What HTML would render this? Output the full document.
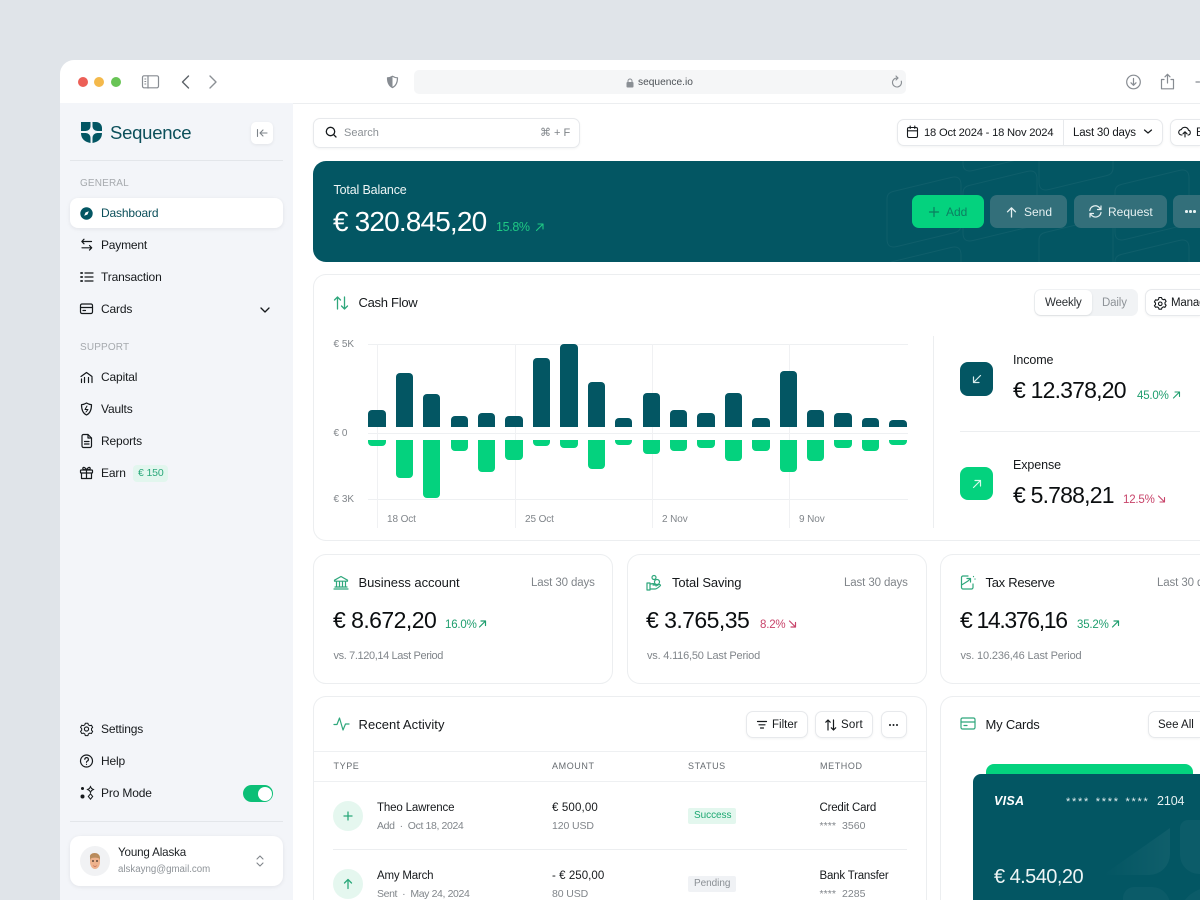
<!DOCTYPE html>
<html lang="en"><head><meta charset="utf-8"><title>Sequence</title>
<style>
*{box-sizing:border-box}
html,body{margin:0;padding:0;width:1200px;height:900px;overflow:hidden}
body{background:#e0e4e9;font-family:"Liberation Sans",sans-serif;color:#16191c}
#r{position:absolute;left:0;top:0;width:1200px;height:900px;overflow:hidden;background:#e0e4e9}
.a{position:absolute}
.t{position:absolute;white-space:nowrap;line-height:16px;font-size:12px;letter-spacing:-.15px}
.g{color:#80858a}
.s{position:absolute;overflow:visible}
.card{position:absolute;background:#fff;border:1px solid #eceef0;border-radius:13px}
.cr{border-right:0;border-top-right-radius:0;border-bottom-right-radius:0}
.cb{border-bottom:0;border-bottom-left-radius:0;border-bottom-right-radius:0}
.btn{position:absolute;background:#fff;border:1px solid #e7e9ec;border-radius:7px;box-shadow:0 1px 2px rgba(20,30,40,.05)}
.br{border-right:0;border-top-right-radius:0;border-bottom-right-radius:0}
.d i,.l i{position:absolute;display:block;width:17.4px}
.d i{background:#035663;border-radius:4px 4px 0 0}
.l i{background:#04d27e;border-radius:0 0 4px 4px;top:440px}
.gh{position:absolute;height:1px;background:#eef0f2}
.gv{position:absolute;width:1px;background:#f0f1f3}
.val{position:absolute;white-space:nowrap;line-height:28px;font-size:23px;letter-spacing:-.55px;color:#0b0e10}
.pu{color:#1f9e6e;font-size:11.5px;letter-spacing:-.2px}
.pd{color:#c8446a;font-size:11.5px;letter-spacing:-.2px}
.th{position:absolute;font-size:9px;letter-spacing:.6px;color:#666b70;line-height:12px}
</style></head><body><div id="r">

<!-- window -->
<div class="a" style="left:60px;top:60px;width:1140px;height:840px;background:#fff;border-radius:14px 0 0 0"></div>
<div class="a" style="left:60px;top:103px;width:233px;height:797px;background:#f3f5f9"></div>
<div class="a" style="left:293px;top:103px;width:907px;height:1px;background:#eceef0"></div>

<!-- traffic lights -->
<div class="a" style="left:77.5px;top:76.5px;width:10px;height:10px;border-radius:50%;background:#ec5f57"></div>
<div class="a" style="left:94px;top:76.5px;width:10px;height:10px;border-radius:50%;background:#f4b94b"></div>
<div class="a" style="left:111px;top:76.5px;width:10px;height:10px;border-radius:50%;background:#68c455"></div>

<svg class="s" style="left:0;top:0" width="1200" height="104" fill="none" stroke="#878c92" stroke-width="1.2" stroke-linecap="round" stroke-linejoin="round">
<rect x="142.5" y="75.8" width="16" height="12" rx="1.5"/><path d="M148 76v12"/><path d="M144.8 79h1M144.8 81.5h1M144.8 84h1" stroke-width="1"/>
<path d="M188.5 76 182.5 82l6 6" stroke="#5c6267" stroke-width="1.4"/><path d="M210 76l6 6-6 6" stroke="#8b9095" stroke-width="1.4"/>
<path d="M392.5 76.2c1.6 1 3.2 1.5 5 1.6 0 4.6-1.2 8-5 9.8-3.8-1.8-5-5.2-5-9.8 1.8-.1 3.4-.6 5-1.6z"/><path d="M392.5 76.5v11c-3.5-1.8-4.8-5-4.8-9.5 1.8-.1 3.3-.5 4.8-1.5z" fill="#878c92" stroke="none"/>
<circle cx="1133.5" cy="82" r="6.8"/><path d="M1133.5 78.5v6.5M1131 82.8l2.5 2.5 2.5-2.5"/>
<path d="M1164 79.5h-2.5v9.3h12v-9.3H1171M1167.5 83V74.5M1165 76.8l2.5-2.5 2.5 2.5"/>
<path d="M1196 82h3.5"/>
</svg>
<div class="a" style="left:414px;top:70px;width:492px;height:24px;background:#f5f6f7;border-radius:5px"></div>
<svg class="s" style="left:625px;top:78px" width="10" height="10" fill="#8a8f94"><rect x="1.5" y="4" width="7" height="5.5" rx="1"/><path d="M3 4V3a2 2 0 0 1 4 0v1" fill="none" stroke="#8a8f94"/></svg>
<div class="t" style="left:638px;top:75px;font-size:10.2px;letter-spacing:0;color:#4d5257">sequence.io</div>
<svg class="s" style="left:890px;top:75px" width="14" height="14" fill="none" stroke="#8a8f94" stroke-width="1.1" stroke-linecap="round"><path d="M7 3a4.5 4.5 0 1 0 4.3 3.2"/><path d="M6 1l2 2-2 2"/></svg>

<!-- sidebar top -->
<svg class="s" style="left:81px;top:122px" width="21" height="21" fill="#035663"><path d="M0 0h9.500v4.200A4.800 4.800 0 0 1 4.700 9H0z"/><path d="M11.500 0H15c3.500 0 6 2.500 6 6v3h-4.700a4.800 4.800 0 0 1-4.800-4.800z"/><path d="M0 11h4.700a4.800 4.800 0 0 1 4.800 4.800V21C4 20 0 17 0 11z"/><path d="M21 11c0 6-4 9-9.500 10v-5.200a4.800 4.800 0 0 1 4.800-4.800z"/></svg>
<div class="t" style="left:110px;top:123px;font-size:18.5px;line-height:20px;letter-spacing:-.25px;color:#0b4f5a">Sequence</div>
<div class="a" style="left:251px;top:122px;width:22px;height:22px;background:#fff;border-radius:5px;box-shadow:0 1px 3px rgba(20,30,40,.08)"></div>
<svg class="s" style="left:251px;top:122px" width="22" height="22" fill="none" stroke="#7d8389" stroke-width="1.1" stroke-linecap="round" stroke-linejoin="round"><path d="M6.500 7.500v7M16 11H9M12 8l-3 3 3 3"/></svg>
<div class="a" style="left:70px;top:160px;width:213px;height:1px;background:#e3e6ea"></div>
<div class="t" style="left:80px;top:176px;font-size:10px;letter-spacing:.15px;color:#a6aaae">GENERAL</div>

<div class="a" style="left:70px;top:198px;width:213px;height:30px;background:#fff;border-radius:8px;box-shadow:0 1px 4px rgba(20,30,40,.08)"></div>
<svg class="s" style="left:80px;top:207px" width="13" height="13"><circle cx="6.5" cy="6.5" r="6.2" fill="#035663"/><path d="M8.800 4.200 7.500 7.500 4.200 8.800 5.500 5.500z" fill="#fff"/></svg>
<div class="t" style="left:101px;top:205px;color:#0b4f5a">Dashboard</div>

<svg class="s" style="left:79px;top:237px" width="16" height="16" fill="none" stroke="#15191c" stroke-width="1.2" stroke-linecap="round" stroke-linejoin="round"><path d="M12.500 4.500H3M5 2.200 2.800 4.500 5 6.800M3 10.800h9.500M10.500 8.500l2.200 2.300-2.200 2.300"/></svg>
<div class="t" style="left:101px;top:237px;letter-spacing:-.2px">Payment</div>
<svg class="s" style="left:79px;top:269px" width="16" height="16" fill="none" stroke="#15191c" stroke-width="1.2" stroke-linecap="round"><path d="M6 4h8M6 8h8M6 12h8"/><path d="M2 4h1.200M2 8h1.200M2 12h1.200" stroke-width="1.800"/></svg>
<div class="t" style="left:101px;top:269px">Transaction</div>
<svg class="s" style="left:79px;top:301px" width="16" height="16" fill="none" stroke="#15191c" stroke-width="1.2" stroke-linecap="round"><rect x="1.5" y="3" width="12" height="9.5" rx="1.5"/><path d="M1.500 6.500h12M4 9.500h2.500"/></svg>
<div class="t" style="left:101px;top:301px">Cards</div>
<svg class="s" style="left:258px;top:305px" width="14" height="10" fill="none" stroke="#15191c" stroke-width="1.3" stroke-linecap="round" stroke-linejoin="round"><path d="M3 3l4 4 4-4"/></svg>

<div class="t" style="left:80px;top:340px;font-size:10px;letter-spacing:.15px;color:#a6aaae">SUPPORT</div>
<svg class="s" style="left:79px;top:369px" width="16" height="16" fill="none" stroke="#15191c" stroke-width="1.2" stroke-linecap="round" stroke-linejoin="round"><path d="M2 7.500 7.500 3.500 13 7.500"/><path d="M2.500 10v3.500M5.500 8.500v5M9.500 8.500v5M13 8.500v5"/></svg>
<div class="t" style="left:101px;top:369px">Capital</div>
<svg class="s" style="left:79px;top:401px" width="16" height="16" fill="none" stroke="#15191c" stroke-width="1.2" stroke-linecap="round" stroke-linejoin="round"><path d="M7.500 2c1.800 1.100 3.400 1.600 5 1.700 0 5-1.300 8.500-5 10.300-3.700-1.800-5-5.300-5-10.300 1.600-.1 3.200-.6 5-1.700z"/><path d="M8 5 6 8.500h3L7 11" stroke-width="1"/></svg>
<div class="t" style="left:101px;top:401px">Vaults</div>
<svg class="s" style="left:79px;top:433px" width="16" height="16" fill="none" stroke="#15191c" stroke-width="1.2" stroke-linecap="round" stroke-linejoin="round"><path d="M3 3a1.500 1.500 0 0 1 1.500-1.500H9L12.500 5v8a1.500 1.500 0 0 1-1.500 1.500H4.500A1.500 1.500 0 0 1 3 13z"/><path d="M9 1.500V5h3.500M5.500 8.500h4.500M5.500 11h4.500"/></svg>
<div class="t" style="left:101px;top:433px">Reports</div>
<svg class="s" style="left:79px;top:465px" width="16" height="16" fill="none" stroke="#15191c" stroke-width="1.2" stroke-linecap="round" stroke-linejoin="round"><rect x="1.5" y="5" width="12" height="3" rx=".8"/><path d="M2.500 8v5.500h10V8M7.500 5v8.500M7.500 5C6 2 4 1.800 3.800 3.300 3.700 4.500 5.500 5 7.500 5zM7.500 5C9 2 11 1.800 11.200 3.300 11.300 4.500 9.500 5 7.500 5z"/></svg>
<div class="t" style="left:101px;top:465px">Earn</div>
<div class="a" style="left:133px;top:465px;width:35px;height:17px;background:#e2f6ee;border-radius:4px"></div>
<div class="t" style="left:138px;top:465px;font-size:10.5px;color:#2aa87a">€ 150</div>

<svg class="s" style="left:79px;top:721px" width="16" height="16" fill="none" stroke="#15191c" stroke-width="1.150" stroke-linejoin="round"><path d="M6 2h3l.5 1.800 1.700.9 1.800-.5 1.400 2.500-1.300 1.300v1.900l1.300 1.300-1.400 2.500-1.800-.5-1.700 1-.5 1.800H6l-.5-1.800-1.700-1-1.800.5L.6 11.200l1.300-1.300V8L.6 6.700 2 4.200l1.800.5 1.700-.9z" transform="translate(1 .5) scale(.88)"/><circle cx="7.5" cy="8" r="2.100"/></svg>
<div class="t" style="left:101px;top:721px">Settings</div>
<svg class="s" style="left:79px;top:753px" width="16" height="16" fill="none" stroke="#15191c" stroke-width="1.2" stroke-linecap="round"><circle cx="7.5" cy="8" r="6"/><path d="M5.800 6.300a1.800 1.800 0 1 1 2.600 1.700c-.6.300-.9.700-.9 1.300"/><path d="M7.500 11.300v.1"/></svg>
<div class="t" style="left:101px;top:753px">Help</div>
<svg class="s" style="left:79px;top:785px" width="16" height="16" fill="#15191c"><circle cx="3.500" cy="3.500" r="1.500"/><circle cx="3.500" cy="11.500" r="2"/><path d="M11.500 1.500l1 2 2 1-2 1-1 2-1-2-2-1 2-1z" fill="none" stroke="#15191c"/><path d="M11.500 8.800l2.200 2.700-2.200 2.700-2.200-2.700z" fill="none" stroke="#15191c"/></svg>
<div class="t" style="left:101px;top:785px">Pro Mode</div>
<div class="a" style="left:243px;top:785px;width:30px;height:17px;border-radius:9px;background:#0cbf77"></div>
<div class="a" style="left:258px;top:786.5px;width:14px;height:14px;border-radius:50%;background:#fff"></div>
<div class="a" style="left:70px;top:821px;width:213px;height:1px;background:#e3e6ea"></div>

<div class="a" style="left:70px;top:836px;width:213px;height:50px;background:#fff;border-radius:10px;box-shadow:0 1px 4px rgba(20,30,40,.08)"></div>
<div class="a" style="left:80px;top:846px;width:30px;height:30px;border-radius:50%;background:#f1f2f4"></div>
<svg class="s" style="left:85px;top:850px" width="20" height="22"><path d="M5 7c-1-5 10-6 10 1v3H5z" fill="#b98a5a"/><ellipse cx="10" cy="12" rx="5" ry="7" fill="#eeb28d"/><path d="M5 9C5.500 5 9 4.500 10.500 5c2 .5 4 1 4.500 4-2-1.500-7-2-10 0z" fill="#b88c5e"/><circle cx="8" cy="11" r=".9" fill="#3a2a20"/><circle cx="12" cy="11" r=".9" fill="#3a2a20"/><path d="M7.800 15.200c1.500 1 3 1 4.400 0-.6 1.700-3.800 1.700-4.400 0z" fill="#b3493e"/></svg>
<div class="t" style="left:118px;top:845px;font-size:11.6px;color:#1c2023">Young Alaska</div>
<div class="t" style="left:118px;top:862px;font-size:9.7px;letter-spacing:0;color:#8e9398">alskayng@gmail.com</div>
<svg class="s" style="left:254px;top:854px" width="12" height="14" fill="none" stroke="#80858a" stroke-width="1.1" stroke-linecap="round" stroke-linejoin="round"><path d="M3 5l3-3 3 3M3 9l3 3 3-3"/></svg>

<!-- top controls -->
<div class="btn" style="left:313px;top:118px;width:267px;height:30px"></div>
<svg class="s" style="left:324px;top:125px" width="14" height="14" fill="none" stroke="#15191c" stroke-width="1.3" stroke-linecap="round"><circle cx="6.5" cy="6.5" r="4.2"/><path d="M9.800 9.800 12 12"/></svg>
<div class="t" style="left:344px;top:125px;font-size:11px;letter-spacing:0;color:#8b9095">Search</div>
<div class="t" style="left:540px;top:125px;font-size:11px;letter-spacing:0;color:#7d8287">⌘ + F</div>

<div class="btn" style="left:897px;top:119px;width:266px;height:27px"></div>
<div class="a" style="left:1063px;top:119px;width:1px;height:27px;background:#e7e9ec"></div>
<svg class="s" style="left:906px;top:125px" width="14" height="14" fill="none" stroke="#15191c" stroke-width="1.1" stroke-linecap="round"><rect x="1.5" y="2.500" width="10" height="10" rx="1.5"/><path d="M1.500 5.800h10M4.200 1v2.500M8.800 1v2.500"/></svg>
<div class="t" style="left:924px;top:125px;font-size:11.2px;letter-spacing:-.2px">18 Oct 2024 - 18 Nov 2024</div>
<div class="t" style="left:1073px;top:125px;font-size:11.5px;letter-spacing:-.2px">Last 30 days</div>
<svg class="s" style="left:1142px;top:127px" width="12" height="10" fill="none" stroke="#15191c" stroke-width="1.2" stroke-linecap="round" stroke-linejoin="round"><path d="M2.500 3 6 6l3.500-3"/></svg>
<div class="btn br" style="left:1170px;top:119px;width:30px;height:27px"></div>
<svg class="s" style="left:1178px;top:125px" width="14" height="14" fill="none" stroke="#15191c" stroke-width="1.1" stroke-linecap="round" stroke-linejoin="round"><path d="M4 10H3.500a2.700 2.700 0 0 1-.2-5.400A3.800 3.800 0 0 1 10.500 5.200 2.500 2.500 0 0 1 10.500 10H10M7 12V7M5 8.800l2-2 2 2"/></svg>
<div class="t" style="left:1196px;top:125px;width:4px;overflow:hidden;font-size:11.5px">Export</div>

<!-- balance -->
<div class="a" style="left:313px;top:161px;width:887px;height:101px;background:#035663;border-radius:13px 0 0 13px;overflow:hidden">
<svg class="s" style="left:0;top:0;overflow:hidden" width="887" height="101" fill="none" stroke="#fff" stroke-opacity=".05">
<defs><path id="tile" d="M0 22Q0 16 6 14.500L64 .5Q74-2 74 8V48Q74 54 68 55.500L10 69.500Q0 72 0 62z"/></defs>
<use href="#tile" x="574" y="16"/><use href="#tile" x="574" y="86"/>
<use href="#tile" x="650" y="10"/><use href="#tile" x="650" y="-60"/>
<use href="#tile" x="726" y="-41"/><use href="#tile" x="726" y="57"/>
<use href="#tile" x="802" y="9"/><use href="#tile" x="802" y="79"/>
</svg>
</div>
<div class="t" style="left:333.5px;top:182px;font-size:12.5px;color:#eef5f5">Total Balance</div>
<div class="t" style="left:333px;top:206px;font-size:28px;line-height:32px;letter-spacing:-.85px;color:#fff">€ 320.845,20</div>
<div class="t" style="left:496px;top:219px;font-size:12.5px;letter-spacing:-.35px;color:#1fc884">15.8%</div>
<svg class="s" style="left:534px;top:221px" width="12" height="12" fill="none" stroke="#1fc884" stroke-width="1.1" stroke-linecap="round" stroke-linejoin="round"><path d="M2.500 9.500 9 3M4 3h5v5"/></svg>

<div class="a" style="left:912px;top:195px;width:72px;height:33px;background:#04d27e;border-radius:7px"></div>
<svg class="s" style="left:927px;top:205px" width="14" height="14" fill="none" stroke="#0a7d5f" stroke-width="1.2" stroke-linecap="round"><path d="M7 2.500v9M2.500 7h9"/></svg>
<div class="t" style="left:946px;top:204px;font-size:12px;color:#0c7f62;letter-spacing:0">Add</div>
<div class="a" style="left:990px;top:195px;width:77px;height:33px;background:#336f7a;border-radius:7px"></div>
<svg class="s" style="left:1004px;top:205px" width="14" height="14" fill="none" stroke="#e6f0f1" stroke-width="1.3" stroke-linecap="round" stroke-linejoin="round"><path d="M7.500 12V3M3.500 6.800l4-4 4 4"/></svg>
<div class="t" style="left:1024px;top:204px;font-size:12px;color:#e6f0f1;letter-spacing:0">Send</div>
<div class="a" style="left:1074px;top:195px;width:93px;height:33px;background:#336f7a;border-radius:7px"></div>
<svg class="s" style="left:1088px;top:204px" width="15" height="15" fill="none" stroke="#e6f0f1" stroke-width="1.2" stroke-linecap="round" stroke-linejoin="round"><path d="M1.800 6.500A5.500 5.500 0 0 1 11.500 3.800L13 5.500M13 2v3.500H9.500M13 8.500A5.500 5.500 0 0 1 3.500 11.200L2 9.500M2 13V9.500h3.500"/></svg>
<div class="t" style="left:1108px;top:204px;font-size:12px;color:#e6f0f1;letter-spacing:0">Request</div>
<div class="a" style="left:1173px;top:195px;width:27px;height:33px;background:#336f7a;border-radius:7px 0 0 7px"></div>
<div class="a" style="left:1185px;top:210px;width:2.5px;height:2.5px;border-radius:50%;background:#e6f0f1;box-shadow:4px 0 0 #e6f0f1,8px 0 0 #e6f0f1"></div>

<!-- cash flow -->
<div class="card cr" style="left:313px;top:274px;width:887px;height:267px"></div>
<svg class="s" style="left:333px;top:295px" width="16" height="16" fill="none" stroke="#2fa77c" stroke-width="1.3" stroke-linecap="round" stroke-linejoin="round"><path d="M4.500 14V2M1.500 5l3-3 3 3M11.500 2v12M8.500 11l3 3 3-3"/></svg>
<div class="t" style="left:358.5px;top:295px;font-size:13px;letter-spacing:-.28px">Cash Flow</div>

<div class="a" style="left:1034px;top:289px;width:104px;height:27px;background:#f1f3f5;border-radius:7px"></div>
<div class="a" style="left:1035px;top:290px;width:57px;height:25px;background:#fff;border-radius:6px;box-shadow:0 1px 2px rgba(20,30,40,.1)"></div>
<div class="t" style="left:1045px;top:295px;font-size:11.5px;letter-spacing:-.15px;color:#2b2f33">Weekly</div>
<div class="t" style="left:1102px;top:295px;font-size:11.5px;letter-spacing:-.15px;color:#8e9398">Daily</div>
<div class="btn br" style="left:1145px;top:289px;width:55px;height:27px"></div>
<svg class="s" style="left:1154px;top:296px" width="14" height="14" fill="none" stroke="#15191c" stroke-width="1.1" stroke-linejoin="round"><path d="M5 1.500h2.500l.5 1.500 1.400.7 1.500-.4 1.200 2.100-1.100 1.100v1.600l1.100 1.100-1.200 2.100-1.500-.4-1.400.8-.5 1.500H5l-.5-1.500-1.400-.8-1.500.4L.4 9.700l1.100-1.100V7L.4 5.900l1.200-2.100 1.500.4 1.400-.7z"/><circle cx="6.250" cy="7.800" r="1.800"/></svg>
<div class="t" style="left:1171px;top:295px;width:29px;overflow:hidden;font-size:11.5px">Manage</div>

<!-- chart -->
<div class="gh" style="left:368px;top:343.5px;width:540px"></div>
<div class="gh" style="left:368px;top:432.5px;width:540px"></div>
<div class="gh" style="left:368px;top:498.5px;width:540px"></div>
<div class="gv" style="left:376.5px;top:344px;height:184px"></div>
<div class="gv" style="left:514.5px;top:344px;height:184px"></div>
<div class="gv" style="left:652px;top:344px;height:184px"></div>
<div class="gv" style="left:788.5px;top:344px;height:184px"></div>
<div class="t g" style="left:333.5px;top:337px;font-size:10px;letter-spacing:0">€ 5K</div>
<div class="t g" style="left:333.5px;top:426px;font-size:10px;letter-spacing:0">€ 0</div>
<div class="t g" style="left:333.5px;top:492px;font-size:10px;letter-spacing:0">€ 3K</div>
<div class="t g" style="left:387px;top:512px;font-size:10px;letter-spacing:-.1px">18 Oct</div>
<div class="t g" style="left:525px;top:512px;font-size:10px;letter-spacing:-.1px">25 Oct</div>
<div class="t g" style="left:662px;top:512px;font-size:10px;letter-spacing:-.1px">2 Nov</div>
<div class="t g" style="left:799px;top:512px;font-size:10px;letter-spacing:-.1px">9 Nov</div>

<div class="d">
<i style="left:368.3px;top:410px;height:16.7px"></i>
<i style="left:395.7px;top:372.7px;height:54px"></i>
<i style="left:423.1px;top:394px;height:32.7px"></i>
<i style="left:450.6px;top:416px;height:10.7px"></i>
<i style="left:478px;top:413.3px;height:13.4px"></i>
<i style="left:505.4px;top:416px;height:10.7px"></i>
<i style="left:532.8px;top:358.3px;height:68.4px"></i>
<i style="left:560.2px;top:344.3px;height:82.4px"></i>
<i style="left:587.7px;top:381.7px;height:45px"></i>
<i style="left:615.1px;top:417.7px;height:9px"></i>
<i style="left:642.5px;top:393.3px;height:33.4px"></i>
<i style="left:669.9px;top:410px;height:16.7px"></i>
<i style="left:697.3px;top:413.3px;height:13.4px"></i>
<i style="left:724.8px;top:393.3px;height:33.4px"></i>
<i style="left:752.2px;top:417.7px;height:9px"></i>
<i style="left:779.6px;top:371.3px;height:55.4px"></i>
<i style="left:807px;top:410px;height:16.7px"></i>
<i style="left:834.4px;top:413.3px;height:13.4px"></i>
<i style="left:861.9px;top:417.7px;height:9px"></i>
<i style="left:889.3px;top:420px;height:6.7px"></i>
</div>
<div class="l">
<i style="left:368.3px;height:6.3px"></i>
<i style="left:395.7px;height:38px"></i>
<i style="left:423.1px;height:58px"></i>
<i style="left:450.6px;height:10.7px"></i>
<i style="left:478px;height:32.3px"></i>
<i style="left:505.4px;height:20.3px"></i>
<i style="left:532.8px;height:6.3px"></i>
<i style="left:560.2px;height:8px"></i>
<i style="left:587.7px;height:29.3px"></i>
<i style="left:615.1px;height:5px"></i>
<i style="left:642.5px;height:14px"></i>
<i style="left:669.9px;height:10.7px"></i>
<i style="left:697.3px;height:8px"></i>
<i style="left:724.8px;height:20.7px"></i>
<i style="left:752.2px;height:10.7px"></i>
<i style="left:779.6px;height:32.3px"></i>
<i style="left:807px;height:20.7px"></i>
<i style="left:834.4px;height:8px"></i>
<i style="left:861.9px;height:10.7px"></i>
<i style="left:889.3px;height:4.7px"></i>
</div>

<div class="a" style="left:933px;top:336px;width:1px;height:192px;background:#eceef0"></div>
<div class="a" style="left:960px;top:362px;width:33px;height:34px;background:#035663;border-radius:8px"></div>
<svg class="s" style="left:970px;top:372px" width="14" height="14" fill="none" stroke="#d6ecec" stroke-width="1.2" stroke-linecap="round" stroke-linejoin="round"><path d="M10.500 3.500 3.500 10.500M3.500 5v5.500H9"/></svg>
<div class="t" style="left:1013px;top:352px;font-size:12.5px;letter-spacing:-.1px">Income</div>
<div class="val" style="left:1013px;top:376px;letter-spacing:-.8px">€ 12.378,20</div>
<div class="t pu" style="left:1137px;top:388px">45.0%</div>
<svg class="s" style="left:1171px;top:389px" width="12" height="12" fill="none" stroke="#1f9e6e" stroke-width="1.1" stroke-linecap="round" stroke-linejoin="round"><path d="M2.500 9 8.500 3M4 3h4.500v4.500"/></svg>
<div class="a" style="left:960px;top:431px;width:240px;height:1px;background:#eceef0"></div>
<div class="a" style="left:960px;top:467px;width:33px;height:33px;background:#04d27e;border-radius:8px"></div>
<svg class="s" style="left:970px;top:477px" width="14" height="14" fill="none" stroke="#d8fbec" stroke-width="1.2" stroke-linecap="round" stroke-linejoin="round"><path d="M3.500 10.500 10.500 3.500M5 3.500h5.500V9"/></svg>
<div class="t" style="left:1013px;top:457px;font-size:12.5px;letter-spacing:-.1px">Expense</div>
<div class="val" style="left:1013px;top:481px;letter-spacing:-.8px">€ 5.788,21</div>
<div class="t pd" style="left:1123px;top:492px">12.5%</div>
<svg class="s" style="left:1156px;top:493px" width="12" height="12" fill="none" stroke="#c8446a" stroke-width="1.1" stroke-linecap="round" stroke-linejoin="round"><path d="M2.500 3 8.500 9M8.500 4.500V9H4"/></svg>

<!-- stat cards -->
<div class="card" style="left:313px;top:554px;width:300px;height:130px"></div>
<svg class="s" style="left:333px;top:575px" width="16" height="16" fill="none" stroke="#2fa77c" stroke-width="1.2" stroke-linecap="round" stroke-linejoin="round"><path d="M1.500 5.200 8 1.500l6.500 3.700v1h-13zM1 14h14M3.500 6.500v5.500M6.500 6.500v5.500M9.500 6.500v5.500M12.500 6.500v5.500M2 12h12"/></svg>
<div class="t" style="left:358.5px;top:575px;font-size:13px;letter-spacing:-.05px">Business account</div>
<div class="t g" style="left:531px;top:575px;font-size:11.5px;letter-spacing:-.12px">Last 30 days</div>
<div class="val" style="left:333px;top:606px">€ 8.672,20</div>
<div class="t pu" style="left:445px;top:617px">16.0%</div>
<svg class="s" style="left:477px;top:618px" width="12" height="12" fill="none" stroke="#1f9e6e" stroke-width="1.2" stroke-linecap="round" stroke-linejoin="round"><path d="M2.500 9 8.500 3M4 3h4.500v4.500"/></svg>
<div class="t g" style="left:333.5px;top:648px;font-size:11px;letter-spacing:-.38px">vs. 7.120,14 Last Period</div>

<div class="card" style="left:627px;top:554px;width:300px;height:130px"></div>
<svg class="s" style="left:646px;top:574px" width="17" height="18" fill="none" stroke="#2fa77c" stroke-width="1.2" stroke-linecap="round" stroke-linejoin="round"><circle cx="8" cy="3.500" r="2"/><circle cx="11" cy="8" r="2.500"/><path d="M1 9h3v7H1zM4 10c2 0 3-1 4.500 0l1 1H7M4 15h5c2 0 4-2 5.500-3.500 0-1-1-1.300-2-.8L10 12"/></svg>
<div class="t" style="left:672px;top:575px;font-size:13px;letter-spacing:-.12px">Total Saving</div>
<div class="t g" style="left:844px;top:575px;font-size:11.5px;letter-spacing:-.12px">Last 30 days</div>
<div class="val" style="left:646px;top:606px">€ 3.765,35</div>
<div class="t pd" style="left:760px;top:617px">8.2%</div>
<svg class="s" style="left:787px;top:618px" width="12" height="12" fill="none" stroke="#c8446a" stroke-width="1.2" stroke-linecap="round" stroke-linejoin="round"><path d="M2.500 3 8.500 9M8.500 4.500V9H4"/></svg>
<div class="t g" style="left:647px;top:648px;font-size:11px;letter-spacing:-.2px">vs. 4.116,50 Last Period</div>

<div class="card cr" style="left:940px;top:554px;width:260px;height:130px"></div>
<svg class="s" style="left:960px;top:574px" width="17" height="18" fill="none" stroke="#2fa77c" stroke-width="1.2" stroke-linecap="round" stroke-linejoin="round"><path d="M8 2H3a1.500 1.500 0 0 0-1.500 1.500v10A1.500 1.500 0 0 0 3 15h8.500a1.500 1.500 0 0 0 1.500-1.500V10M1.500 11 4 9.500 8 7l2-2M7 4.500h3.500V8M13.500 2.500v.1M15 5v.1"/></svg>
<div class="t" style="left:985.5px;top:575px;font-size:13px;letter-spacing:-.28px">Tax Reserve</div>
<div class="t g" style="left:1157px;top:575px;width:43px;overflow:hidden;font-size:11.5px;letter-spacing:-.12px">Last 30 days</div>
<div class="val" style="left:960px;top:606px;letter-spacing:-1.35px">€ 14.376,16</div>
<div class="t pu" style="left:1077px;top:617px">35.2%</div>
<svg class="s" style="left:1110px;top:618px" width="12" height="12" fill="none" stroke="#1f9e6e" stroke-width="1.2" stroke-linecap="round" stroke-linejoin="round"><path d="M2.500 9 8.500 3M4 3h4.500v4.500"/></svg>
<div class="t g" style="left:960.5px;top:648px;font-size:11px;letter-spacing:-.15px">vs. 10.236,46 Last Period</div>

<!-- recent activity -->
<div class="card cb" style="left:313px;top:696px;width:614px;height:204px"></div>
<svg class="s" style="left:333px;top:716px" width="18" height="16" fill="none" stroke="#2fa77c" stroke-width="1.2" stroke-linecap="round" stroke-linejoin="round"><path d="M1 8.500h3L6.500 2 10 14l2.500-6H16"/></svg>
<div class="t" style="left:358.5px;top:717px;font-size:13px;letter-spacing:.05px">Recent Activity</div>
<div class="btn" style="left:746px;top:711px;width:62px;height:27px"></div>
<svg class="s" style="left:755px;top:718px" width="14" height="14" fill="none" stroke="#15191c" stroke-width="1.2" stroke-linecap="round"><path d="M2.500 3.500h9M4 6.800h6M5.500 10h3"/></svg>
<div class="t" style="left:772px;top:717px;font-size:11.5px;letter-spacing:0">Filter</div>
<div class="btn" style="left:815px;top:711px;width:58px;height:27px"></div>
<svg class="s" style="left:824px;top:718px" width="14" height="14" fill="none" stroke="#15191c" stroke-width="1.2" stroke-linecap="round" stroke-linejoin="round"><path d="M4 12V2M1.800 4.200 4 2l2.200 2.200M9.500 2v10M7.300 9.800 9.500 12l2.200-2.200"/></svg>
<div class="t" style="left:841px;top:717px;font-size:11.5px;letter-spacing:.2px">Sort</div>
<div class="btn" style="left:881px;top:711px;width:26px;height:27px"></div>
<div class="a" style="left:888.5px;top:723.5px;width:2px;height:2px;border-radius:50%;background:#15191c;box-shadow:3.5px 0 0 #15191c,7px 0 0 #15191c"></div>
<div class="a" style="left:314px;top:751px;width:612px;height:1px;background:#eef0f2"></div>
<div class="th" style="left:333.5px;top:760px">TYPE</div>
<div class="th" style="left:552px;top:760px">AMOUNT</div>
<div class="th" style="left:688px;top:760px">STATUS</div>
<div class="th" style="left:820px;top:760px">METHOD</div>
<div class="a" style="left:314px;top:781px;width:612px;height:1px;background:#eef0f2"></div>

<div class="a" style="left:333px;top:801px;width:30px;height:30px;border-radius:50%;background:#e5f7ef"></div>
<svg class="s" style="left:341px;top:809px" width="14" height="14" fill="none" stroke="#2aa87a" stroke-width="1.3" stroke-linecap="round"><path d="M7 3v8M3 7h8"/></svg>
<div class="t" style="left:377px;top:800px;font-size:11.5px;letter-spacing:-.15px">Theo Lawrence</div>
<div class="t g" style="left:377px;top:818px;font-size:10.5px;letter-spacing:-.38px">Add &nbsp;·&nbsp; Oct 18, 2024</div>
<div class="t" style="left:552px;top:800px;font-size:11.5px;letter-spacing:.15px">€ 500,00</div>
<div class="t g" style="left:552px;top:818px;font-size:10.5px;letter-spacing:-.1px">120 USD</div>
<div class="a" style="left:688px;top:808px;width:48px;height:16px;background:#e3f7ee;border-radius:2px"></div>
<div class="t" style="left:694px;top:808px;font-size:10px;letter-spacing:-.05px;color:#1ea872">Success</div>
<div class="t" style="left:819.5px;top:800px;font-size:11.5px;letter-spacing:-.2px">Credit Card</div>
<div class="t g" style="left:819.5px;top:818px;font-size:10.5px;letter-spacing:.05px">**** &nbsp;3560</div>
<div class="a" style="left:333px;top:849px;width:574px;height:1px;background:#eceef0"></div>

<div class="a" style="left:333px;top:869px;width:30px;height:30px;border-radius:50%;background:#e5f7ef"></div>
<svg class="s" style="left:341px;top:877px" width="14" height="14" fill="none" stroke="#2aa87a" stroke-width="1.3" stroke-linecap="round" stroke-linejoin="round"><path d="M7 11.500v-9M3.500 6 7 2.500 10.500 6"/></svg>
<div class="t" style="left:377px;top:868px;font-size:11.5px;letter-spacing:-.2px">Amy March</div>
<div class="t g" style="left:377px;top:886px;height:14px;font-size:10.5px;letter-spacing:-.38px">Sent &nbsp;·&nbsp; May 24, 2024</div>
<div class="t" style="left:552px;top:868px;font-size:11.5px;letter-spacing:.05px">- € 250,00</div>
<div class="t g" style="left:552px;top:886px;height:14px;font-size:10.5px;letter-spacing:-.1px">80 USD</div>
<div class="a" style="left:688px;top:876px;width:48px;height:16px;background:#f0f2f5;border-radius:2px"></div>
<div class="t" style="left:694px;top:876px;font-size:10px;letter-spacing:-.05px;color:#8a8f94">Pending</div>
<div class="t" style="left:819.5px;top:868px;font-size:11.5px;letter-spacing:-.2px">Bank Transfer</div>
<div class="t g" style="left:819.5px;top:886px;height:14px;font-size:10.5px;letter-spacing:.05px">**** &nbsp;2285</div>

<!-- my cards -->
<div class="card cr cb" style="left:940px;top:696px;width:260px;height:204px"></div>
<svg class="s" style="left:960px;top:716px" width="17" height="16" fill="none" stroke="#2fa77c" stroke-width="1.2" stroke-linecap="round"><rect x="1" y="2" width="14" height="11" rx="1.5"/><path d="M1 6h14M4 9.500h3"/></svg>
<div class="t" style="left:985.5px;top:717px;font-size:13px;letter-spacing:-.2px">My Cards</div>
<div class="btn br" style="left:1148px;top:711px;width:52px;height:27px"></div>
<div class="t" style="left:1158px;top:717px;font-size:11.5px;letter-spacing:0">See All</div>

<div class="a" style="left:986px;top:764px;width:207px;height:30px;background:#04d27e;border-radius:8px 8px 0 0"></div>
<div class="a" style="left:973px;top:774px;width:227px;height:126px;background:#035663;border-radius:8px 0 0 0;overflow:hidden">
<svg class="s" style="left:0;top:0;overflow:hidden" width="227" height="126">
<defs><linearGradient id="fade" x1="0" y1="0" x2="1" y2="0"><stop offset="0" stop-color="#fff" stop-opacity="0"/><stop offset="1" stop-color="#fff" stop-opacity=".05"/></linearGradient></defs>
<path d="M197 54V80a21 21 0 0 1-21 21H130z" fill="url(#fade)"/>
<path d="M207 54a8 8 0 0 1 8-8h25v54h-14a19 19 0 0 1-19-19z" fill="#fff" fill-opacity=".04"/>
<path d="M150 140v-16a11 11 0 0 1 11-11h18a18 18 0 0 1 18 18v9z" fill="#fff" fill-opacity=".035"/>
<path d="M207 140c0-14 14-27 33-27v27z" fill="#fff" fill-opacity=".035"/>
</svg>
</div>
<div class="t" style="left:994px;top:793px;font-size:12.5px;font-weight:700;font-style:italic;letter-spacing:.3px;color:#fff">VISA</div>
<div class="t" style="left:1066px;top:794px;font-size:11px;letter-spacing:1.72px;word-spacing:1px;color:#e6f0f1">**** **** ****</div>
<div class="t" style="left:1157px;top:793px;font-size:12.5px;letter-spacing:-.1px;color:#e6f0f1">2104</div>
<div class="t" style="left:994px;top:866px;font-size:20px;line-height:22px;letter-spacing:-.55px;color:#eef5f5">€ 4.540,20</div>
</div></body></html>
